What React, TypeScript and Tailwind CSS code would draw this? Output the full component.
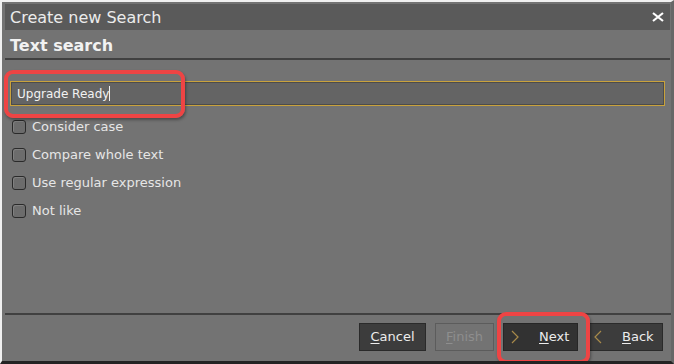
import React from "react";

const options = ["Consider case", "Compare whole text", "Use regular expression", "Not like"];

const Checkbox: React.FC<{ label: string }> = ({ label }) => (
  <div className="h-[28px] flex items-center pl-[10px] gap-[6px]">
    <span className="w-[14px] h-[14px] rounded-[3px] border border-[#2a2a2a] bg-[#6c6c6c] shadow-[inset_1px_1px_0_#808080]" />
    <span className="text-[13px] text-[#e6e6e6]">{label}</span>
  </div>
);

const Chevron: React.FC<{ dir: "left" | "right" }> = ({ dir }) => (
  <svg width="8" height="14" viewBox="0 0 8 14" className="shrink-0">
    <path
      d={dir === "right" ? "M1 1 L7 7 L1 13" : "M7 1 L1 7 L7 13"}
      fill="none"
      stroke="#a88a4a"
      strokeWidth="1.2"
    />
  </svg>
);

export default function App() {
  return (
    <div
      className="relative w-[674px] h-[364px] overflow-hidden bg-[#737373] border-t-2 border-l-2 border-r-[3px] border-b-[3px] border-t-[#f0f0f0] border-l-[#f0f0f0] border-r-[#676767] border-b-[#232323] flex flex-col"
      style={{ fontFamily: '"DejaVu Sans", Verdana, sans-serif' }}
    >
      {/* title bar */}
      <div className="mt-[2px] ml-[3px] mr-[1px] h-[26px] bg-[#5a5a5a] flex items-center justify-between pl-[5px] pr-[6px]">
        <span className="text-[16px] text-[#ebebeb] leading-none pt-[1px]">Create new Search</span>
        <svg width="12" height="10" viewBox="0 0 12 10">
          <path d="M1 1 L11 9 M11 1 L1 9" stroke="#ffffff" strokeWidth="2.2" />
        </svg>
      </div>

      <div className="h-[28px] flex items-center pl-[8px] pt-[3px]">
        <span className="text-[16px] font-bold text-[#f2f2f2] leading-none">Text search</span>
      </div>
      <div className="ml-[3px] mr-[1px] h-[2px] bg-[#404040]" />

      {/* search field */}
      <div className="mt-[21px] ml-[8px] mr-[6px] h-[25px] border border-[#c9a23c]">
        <div className="h-full border border-[#4c4c4c] bg-[#646464] flex items-center pl-[5px]">
          <span className="text-[12px] text-[#f2f2f2]">Upgrade Ready</span>
          <span className="w-px h-[15px] bg-[#f0f0f0]" />
        </div>
      </div>

      <div className="mt-[7px] flex flex-col">
        {options.map((o) => (
          <Checkbox key={o} label={o} />
        ))}
      </div>

      <div className="flex-1" />
      <div className="ml-[3px] h-[2px] bg-[#404040]" />

      {/* footer */}
      <div className="h-[46px] flex justify-end items-start pt-[8px] pr-[8px] gap-[9px] text-[13px]">
        <button className="w-[67px] h-[28px] bg-[#3c3c3c] border border-[#2a2a2a] text-[#ececec]">
          <span className="underline underline-offset-2">C</span>ancel
        </button>
        <button className="w-[59px] h-[28px] bg-[#737373] border border-[#5c5c5c] text-[#8e8e8e]">
          <span className="underline underline-offset-2">F</span>inish
        </button>
        <button className="w-[75px] h-[28px] bg-[#323232] border border-[#262626] text-[#ececec] flex items-center pl-[7px]">
          <Chevron dir="right" />
          <span className="ml-[20px]">
            <span className="underline underline-offset-2">N</span>ext
          </span>
        </button>
        <button className="w-[76px] h-[28px] bg-[#3c3c3c] border border-[#2a2a2a] text-[#ececec] flex items-center pl-[6px]">
          <Chevron dir="left" />
          <span className="ml-[20px]">
            <span className="underline underline-offset-2">B</span>ack
          </span>
        </button>
      </div>

      {/* red highlights */}
      <div className="absolute left-[2px] top-[68px] w-[181px] h-[48px] rounded-[9px] border-4 border-[#ee4444] shadow-[1px_2px_3px_rgba(0,0,0,0.35)]" />
      <div className="absolute left-[495px] top-[310px] w-[93px] h-[52px] rounded-[9px] border-4 border-[#ee4444] shadow-[1px_2px_3px_rgba(0,0,0,0.35)]" />
    </div>
  );
}
